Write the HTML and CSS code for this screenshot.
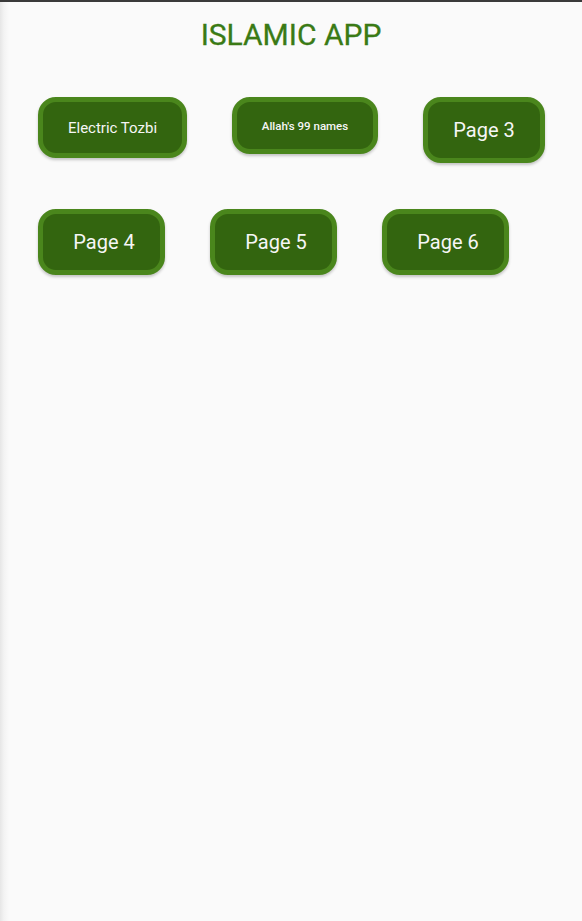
FILE: index.html
```html
<!DOCTYPE html>
<html>
<head>
<meta charset="utf-8">
<link rel="stylesheet" href="styles.css">
</head>
<body>
<div class="topline"></div>
<div class="screen">
  <h1 class="title">ISLAMIC APP</h1>
  <div class="rows">
    <div class="row">
      <button class="btn btn-md">Electric Tozbi</button>
      <button class="btn btn-sm">Allah's 99 names</button>
      <button class="btn btn-lg">Page 3</button>
    </div>
    <div class="row">
      <button class="btn btn-lg btn-wide">Page 4</button>
      <button class="btn btn-lg btn-wide">Page 5</button>
      <button class="btn btn-lg btn-wide">Page 6</button>
    </div>
  </div>
</div>
</body>
</html>
```
FILE: styles.css
```css
html, body {
  margin: 0;
  padding: 0;
  height: 100%;
}
body {
  background: #fafafa;
  font-family: Roboto, "Liberation Sans", sans-serif;
  overflow: hidden;
}
.topline {
  height: 2px;
  background: #3a3a3a;
}
.screen {
  height: 919px;
  background: linear-gradient(to right, #e6e6e6 0px, #f3f3f3 4px, #fafafa 9px);
}
.title {
  margin: 0;
  padding-top: 15px;
  text-align: center;
  font-size: 30px;
  font-weight: 400;
  line-height: 36px;
  color: #3a7a15;
  -webkit-text-stroke: 0.3px #3a7a15;
}
.rows {
  display: flex;
  flex-direction: column;
  gap: 46px;
  padding: 44px 0 0 38px;
}
.row {
  display: flex;
  align-items: flex-start;
  gap: 45px;
}
.btn {
  box-sizing: border-box;
  border: 5px solid #4a861c;
  background: #33650f;
  color: #f6f6f6;
  border-radius: 18px;
  font-family: Roboto, "Liberation Sans", sans-serif;
  box-shadow: 0 2px 3px rgba(0, 0, 0, 0.22);
  padding: 0;
  display: flex;
  align-items: center;
  justify-content: center;
}
.btn-md {
  width: 149px;
  height: 61px;
  font-size: 15px;
  font-weight: 400;
  padding-top: 1px;
}
.btn-sm {
  width: 146px;
  height: 57px;
  font-size: 11.5px;
  font-weight: 500;
}
.btn-lg {
  width: 122px;
  height: 66px;
  font-size: 20px;
}
.btn-wide {
  width: 127px;
  padding-left: 5px;
}
```
